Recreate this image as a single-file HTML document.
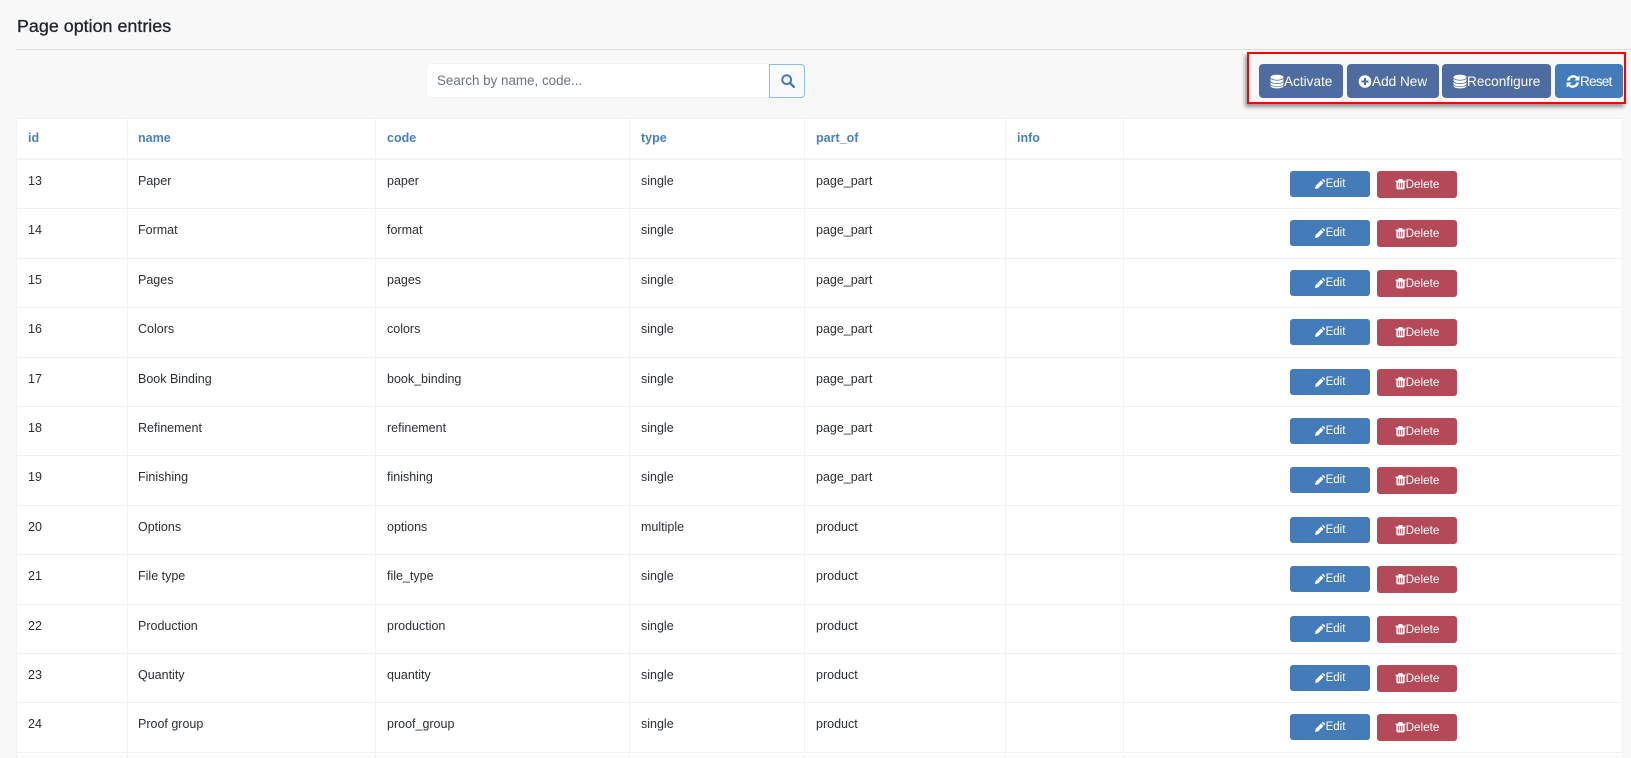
<!DOCTYPE html>
<html lang="en">
<head>
<meta charset="utf-8">
<title>Page option entries</title>
<style>
html,body{margin:0;padding:0;width:1631px;height:758px;overflow:hidden;background:#f8f8f8;font-family:"Liberation Sans",sans-serif;color:#2b2f33}
body{position:relative}
h1{position:absolute;left:17px;top:15px;margin:0;font-size:17.9px;line-height:22px;font-weight:400;color:#212529;-webkit-text-stroke:.3px #212529}
.rule{position:absolute;left:16px;width:1615px;top:49px;height:1px;background:#dedede}
.search{position:absolute;left:427px;top:64px;width:342px;height:33px;background:#fff;border-radius:4px 0 0 4px;box-shadow:0 0 0 1px #f2f2f2;box-sizing:border-box;padding-left:10px;line-height:34px;font-size:13.4px;color:#6c757d}
.sbtn{position:absolute;left:769px;top:64px;width:36px;height:34px;box-sizing:border-box;border:1px solid #8cbcec;border-radius:0 4px 4px 0;background:#f8f9fa}
.sbtn svg{position:absolute;left:11px;top:9px}
.box{position:absolute;left:1247px;top:52px;width:379px;height:52px;box-sizing:border-box;border:2px solid #f00;box-shadow:-2px 3px 4px rgba(0,0,0,.4)}
.tb{position:absolute;top:64px;height:34px;border-radius:4px;background:#4f6ca0;color:#fff;font-size:13.6px;line-height:35px;white-space:nowrap;box-sizing:border-box;padding-left:11px}
.tb svg{vertical-align:-3px}
.blue{background:#447cb9}
table{position:absolute;left:16px;top:118px;width:1607px;border-collapse:collapse;table-layout:fixed;background:#fff;font-size:12.5px}
th,td{border:1px solid #f2f2f2;padding:0 0 0 11px;text-align:left;vertical-align:top;overflow:visible}
th:nth-child(2),td:nth-child(2){padding-left:10px}
th{height:39px;line-height:39px;color:#4a80bf;font-weight:700;font-size:12.5px;border-bottom:2px solid #f2f2f2}
td{height:48.4px;line-height:42px;position:relative}
tr.end td{height:4px;line-height:4px}
.b{position:absolute;width:80px;border-radius:3px;color:#fff;text-align:center;white-space:nowrap}
.b svg{vertical-align:-2px}
.e{left:166px;top:11px;height:26px;line-height:26px;background:#447cb9;font-size:11.5px}
.d{left:253px;top:11px;height:27px;line-height:28px;background:#b44a58;font-size:11.7px}
</style>
</head>
<body>
<svg width="0" height="0" style="position:absolute">
<symbol id="db" viewBox="0 0 16 16"><path fill="#fff" d="M8 0.300C3.700.3.600 1.600.600 3.200S3.700 6.100 8 6.100s7.400-1.300 7.400-2.900S12.300.3 8 .3zM.6 4.900V7c0 1.600 3.100 2.900 7.400 2.900S15.400 8.600 15.400 7V4.900C14.100 6.200 11.300 7 8 7S1.900 6.200.6 4.900zM.6 8.700v2c0 1.600 3.100 2.900 7.400 2.900s7.400-1.300 7.400-2.900v-2c-1.300 1.300-4.100 2.100-7.400 2.100S1.900 10 .6 8.700zM.6 12.300v1c0 1.500 3.100 2.600 7.400 2.600s7.400-1.100 7.400-2.600v-1c-1.300 1.300-4.100 2.100-7.400 2.100s-6.100-.8-7.400-2.100z"/></symbol>
<symbol id="plus" viewBox="0 0 16 16"><path fill="#fff" fill-rule="evenodd" d="M8 .8a7.200 7.200 0 1 0 0 14.400A7.200 7.200 0 0 0 8 .8zM6.800 4h2.400v2.800H12v2.400H9.200V12H6.800V9.200H4V6.800h2.800z"/></symbol>
<symbol id="ref" viewBox="0 0 16 16"><path fill="#fff" d="M15.300 1v5.800H9.500l2.100-2.100A4.500 4.500 0 0 0 4.200 6.800H1A7.400 7.400 0 0 1 13.400 2.900zM.7 15V9.200h5.800l-2.100 2.100a4.500 4.500 0 0 0 7.400-2.100H15A7.400 7.400 0 0 1 2.600 13.100z"/></symbol>
<symbol id="pen" viewBox="0 0 16 16"><path fill="#fff" d="M11.500 1l3.500 3.500-1.700 1.700-3.500-3.500zM8.800 3.700l3.500 3.500-7.800 7.800-4.500 1 1-4.500z"/></symbol>
<symbol id="tr" viewBox="0 0 16 16"><path fill="#fff" fill-rule="evenodd" d="M5.500 .8h5l1 2.200H15.500v1.500h-1.500V14a1.800 1.800 0 0 1-1.800 1.800H3.800A1.800 1.800 0 0 1 2 14V4.500H.5V3h4zM4.800 6v7.500h1.200V6zm2.600 0v7.500h1.200V6zM10 6v7.500h1.200V6z"/></symbol>
</svg>

<h1>Page option entries</h1>
<div class="rule"></div>

<div class="search">Search by name, code...</div>
<div class="sbtn"><svg width="14" height="14" viewBox="0 0 14 14"><circle cx="5.700" cy="5.700" r="4.400" fill="none" stroke="#447cb9" stroke-width="2"/><path d="M9 9l3.800 3.800" stroke="#447cb9" stroke-width="2.400" stroke-linecap="round"/></svg></div>

<div class="box"></div>
<div class="tb" style="left:1259px;width:84px"><svg width="14" height="15"><use href="#db"/></svg>Activate</div>
<div class="tb" style="left:1347px;width:92px"><svg width="14" height="15"><use href="#plus"/></svg>Add New</div>
<div class="tb" style="left:1442px;width:109px"><svg width="14" height="15"><use href="#db"/></svg>Reconfigure</div>
<div class="tb blue" style="left:1555px;width:68px;letter-spacing:-.8px"><svg width="14" height="15"><use href="#ref"/></svg>Reset</div>

<table>
<colgroup><col style="width:111px"><col style="width:248px"><col style="width:254px"><col style="width:175px"><col style="width:201px"><col style="width:118px"><col></colgroup>
<tr><th>id</th><th>name</th><th>code</th><th>type</th><th>part_of</th><th>info</th><th></th></tr>
<tr><td>13</td><td>Paper</td><td>paper</td><td>single</td><td>page_part</td><td></td><td><div class="b e"><svg width="11" height="11"><use href="#pen"/></svg>Edit</div><div class="b d"><svg width="11" height="12"><use href="#tr"/></svg>Delete</div></td></tr>
<tr><td>14</td><td>Format</td><td>format</td><td>single</td><td>page_part</td><td></td><td><div class="b e"><svg width="11" height="11"><use href="#pen"/></svg>Edit</div><div class="b d"><svg width="11" height="12"><use href="#tr"/></svg>Delete</div></td></tr>
<tr><td>15</td><td>Pages</td><td>pages</td><td>single</td><td>page_part</td><td></td><td><div class="b e"><svg width="11" height="11"><use href="#pen"/></svg>Edit</div><div class="b d"><svg width="11" height="12"><use href="#tr"/></svg>Delete</div></td></tr>
<tr><td>16</td><td>Colors</td><td>colors</td><td>single</td><td>page_part</td><td></td><td><div class="b e"><svg width="11" height="11"><use href="#pen"/></svg>Edit</div><div class="b d"><svg width="11" height="12"><use href="#tr"/></svg>Delete</div></td></tr>
<tr><td>17</td><td>Book Binding</td><td>book_binding</td><td>single</td><td>page_part</td><td></td><td><div class="b e"><svg width="11" height="11"><use href="#pen"/></svg>Edit</div><div class="b d"><svg width="11" height="12"><use href="#tr"/></svg>Delete</div></td></tr>
<tr><td>18</td><td>Refinement</td><td>refinement</td><td>single</td><td>page_part</td><td></td><td><div class="b e"><svg width="11" height="11"><use href="#pen"/></svg>Edit</div><div class="b d"><svg width="11" height="12"><use href="#tr"/></svg>Delete</div></td></tr>
<tr><td>19</td><td>Finishing</td><td>finishing</td><td>single</td><td>page_part</td><td></td><td><div class="b e"><svg width="11" height="11"><use href="#pen"/></svg>Edit</div><div class="b d"><svg width="11" height="12"><use href="#tr"/></svg>Delete</div></td></tr>
<tr><td>20</td><td>Options</td><td>options</td><td>multiple</td><td>product</td><td></td><td><div class="b e"><svg width="11" height="11"><use href="#pen"/></svg>Edit</div><div class="b d"><svg width="11" height="12"><use href="#tr"/></svg>Delete</div></td></tr>
<tr><td>21</td><td>File type</td><td>file_type</td><td>single</td><td>product</td><td></td><td><div class="b e"><svg width="11" height="11"><use href="#pen"/></svg>Edit</div><div class="b d"><svg width="11" height="12"><use href="#tr"/></svg>Delete</div></td></tr>
<tr><td>22</td><td>Production</td><td>production</td><td>single</td><td>product</td><td></td><td><div class="b e"><svg width="11" height="11"><use href="#pen"/></svg>Edit</div><div class="b d"><svg width="11" height="12"><use href="#tr"/></svg>Delete</div></td></tr>
<tr><td>23</td><td>Quantity</td><td>quantity</td><td>single</td><td>product</td><td></td><td><div class="b e"><svg width="11" height="11"><use href="#pen"/></svg>Edit</div><div class="b d"><svg width="11" height="12"><use href="#tr"/></svg>Delete</div></td></tr>
<tr><td>24</td><td>Proof group</td><td>proof_group</td><td>single</td><td>product</td><td></td><td><div class="b e"><svg width="11" height="11"><use href="#pen"/></svg>Edit</div><div class="b d"><svg width="11" height="12"><use href="#tr"/></svg>Delete</div></td></tr>
<tr class="end"><td></td><td></td><td></td><td></td><td></td><td></td><td></td></tr>
</table>
</body>
</html>
